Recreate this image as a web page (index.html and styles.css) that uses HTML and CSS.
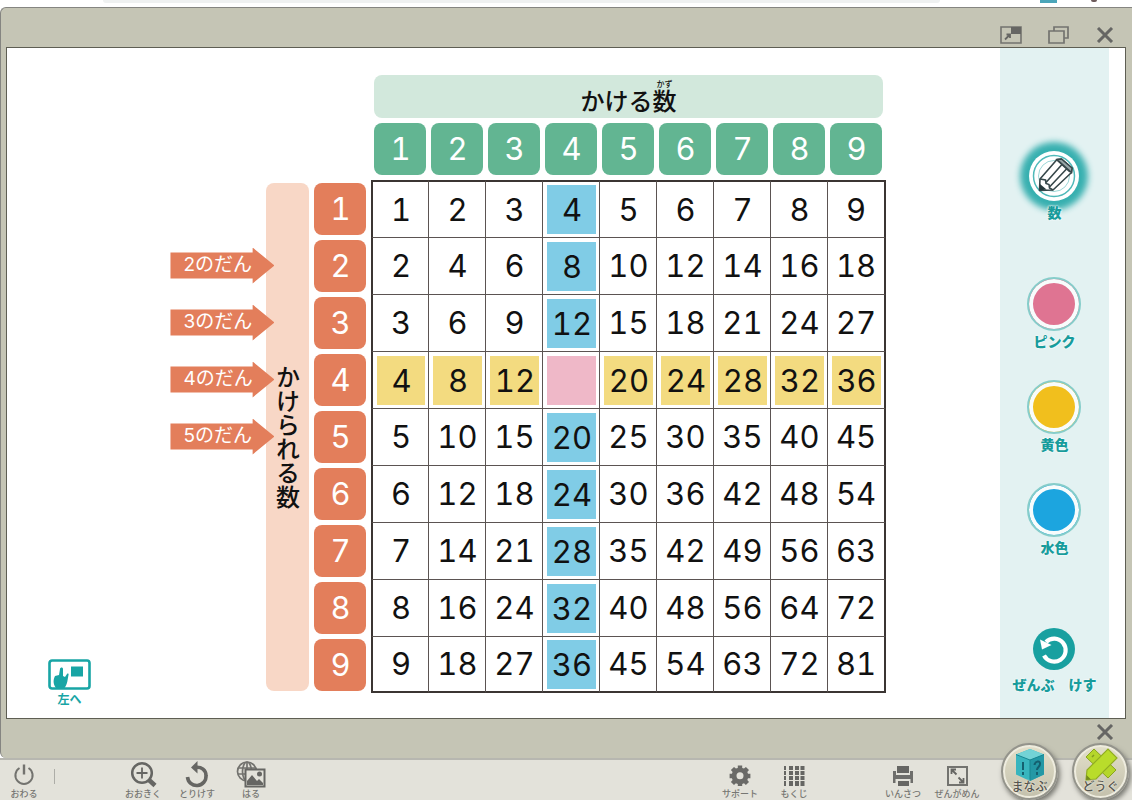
FILE: index.html
```html
<!DOCTYPE html>
<html lang="ja">
<head>
<meta charset="utf-8">
<meta name="viewport" content="width=device-width, initial-scale=1">
<title>かけ算九九の表</title>
<link rel="stylesheet" href="styles.css">
</head>
<body>
<div class="strip"><span class="strip-field"></span><span class="strip-badge"></span><span class="strip-dot"></span></div>

<div class="frame">
  <header class="titlebar">
    <button class="win-btn" type="button" aria-label="小さくする"><svg width="22" height="18" viewBox="0 0 22 18"><path d="M1 1h20v16H1z" fill="none" stroke="#73736f" stroke-width="1.6"/><path d="M11 1h10v7H11z" fill="#666663"/><path d="M5 13.500l5-5M6.500 8.500H10V12" fill="none" stroke="#666663" stroke-width="1.800"/></svg></button>
    <button class="win-btn" type="button" aria-label="元のサイズ"><svg width="22" height="18" viewBox="0 0 22 18"><path d="M6 5V1h14v11h-4M1 5h15v12H1z" fill="none" stroke="#73736f" stroke-width="1.700"/></svg></button>
    <button class="win-btn" type="button" aria-label="とじる"><svg width="18" height="16" viewBox="0 0 18 16"><path d="M2 1l14 14M16 1L2 15" stroke="#666664" stroke-width="3"/></svg></button>
  </header>

  <main class="stage">
    <button class="move-left" type="button">
      <svg width="43" height="31" viewBox="0 0 43 31"><rect x="1.500" y="1.500" width="40" height="28" rx="2.500" fill="#fff" stroke="#18a5a5" stroke-width="2.600"/><path d="M23 7.500h12v10H23z" fill="#18a5a5"/><path d="M8 29c-3-4-3-8-1-12l4-1 1-6c.3-2 3-2 3 0v7l2 1 2-3c1-1 2 0 1.500 1-1 5-1 9-4 13z" fill="#18a5a5"/></svg>
      <span>左へ</span>
    </button>

    <table class="board">
      <colgroup><col class="c-step"><col class="c-side"><col class="c-head"><col class="c-num" span="8"><col class="c-last"></colgroup>
      <thead>
        <tr class="r-banner"><td colspan="3"></td><th colspan="9" scope="colgroup"><div class="banner"><span>かける<ruby>数<rt>かず</rt></ruby></span></div></th></tr>
        <tr class="r-heads"><td colspan="3"></td><th scope="col"><div class="tile green">1</div></th><th scope="col"><div class="tile green">2</div></th><th scope="col"><div class="tile green">3</div></th><th scope="col"><div class="tile green">4</div></th><th scope="col"><div class="tile green">5</div></th><th scope="col"><div class="tile green">6</div></th><th scope="col"><div class="tile green">7</div></th><th scope="col"><div class="tile green">8</div></th><th scope="col"><div class="tile green">9</div></th></tr>
      </thead>
      <tbody>
        <tr><td></td><th class="side" rowspan="9" scope="rowgroup"><div class="side-bar">かけられる数</div></th><th scope="row"><div class="tile orange">1</div></th><td class="n">1</td><td class="n">2</td><td class="n">3</td><td class="n"><span class="blue">4</span></td><td class="n">5</td><td class="n">6</td><td class="n">7</td><td class="n">8</td><td class="n">9</td></tr>
        <tr><td><div class="step">2のだん</div></td><th scope="row"><div class="tile orange">2</div></th><td class="n">2</td><td class="n">4</td><td class="n">6</td><td class="n"><span class="blue">8</span></td><td class="n">10</td><td class="n">12</td><td class="n">14</td><td class="n">16</td><td class="n">18</td></tr>
        <tr><td><div class="step">3のだん</div></td><th scope="row"><div class="tile orange">3</div></th><td class="n">3</td><td class="n">6</td><td class="n">9</td><td class="n"><span class="blue">12</span></td><td class="n">15</td><td class="n">18</td><td class="n">21</td><td class="n">24</td><td class="n">27</td></tr>
        <tr><td><div class="step">4のだん</div></td><th scope="row"><div class="tile orange">4</div></th><td class="n"><span class="yellow">4</span></td><td class="n"><span class="yellow">8</span></td><td class="n"><span class="yellow">12</span></td><td class="n"><span class="pink"></span></td><td class="n"><span class="yellow">20</span></td><td class="n"><span class="yellow">24</span></td><td class="n"><span class="yellow">28</span></td><td class="n"><span class="yellow">32</span></td><td class="n"><span class="yellow">36</span></td></tr>
        <tr><td><div class="step">5のだん</div></td><th scope="row"><div class="tile orange">5</div></th><td class="n">5</td><td class="n">10</td><td class="n">15</td><td class="n"><span class="blue">20</span></td><td class="n">25</td><td class="n">30</td><td class="n">35</td><td class="n">40</td><td class="n">45</td></tr>
        <tr><td></td><th scope="row"><div class="tile orange">6</div></th><td class="n">6</td><td class="n">12</td><td class="n">18</td><td class="n"><span class="blue">24</span></td><td class="n">30</td><td class="n">36</td><td class="n">42</td><td class="n">48</td><td class="n">54</td></tr>
        <tr><td></td><th scope="row"><div class="tile orange">7</div></th><td class="n">7</td><td class="n">14</td><td class="n">21</td><td class="n"><span class="blue">28</span></td><td class="n">35</td><td class="n">42</td><td class="n">49</td><td class="n">56</td><td class="n">63</td></tr>
        <tr><td></td><th scope="row"><div class="tile orange">8</div></th><td class="n">8</td><td class="n">16</td><td class="n">24</td><td class="n"><span class="blue">32</span></td><td class="n">40</td><td class="n">48</td><td class="n">56</td><td class="n">64</td><td class="n">72</td></tr>
        <tr><td></td><th scope="row"><div class="tile orange">9</div></th><td class="n">9</td><td class="n">18</td><td class="n">27</td><td class="n"><span class="blue">36</span></td><td class="n">45</td><td class="n">54</td><td class="n">63</td><td class="n">72</td><td class="n">81</td></tr>
      </tbody>
    </table>

    <aside class="palette">
      <button class="pal pal-pencil" type="button">
        <svg class="glow" width="54" height="54" viewBox="0 0 54 54"><circle cx="27" cy="27" r="25" fill="#fff"/><circle cx="27" cy="27" r="20.500" fill="none" stroke="#4fb9b9" stroke-width="1.500"/><circle cx="27" cy="27" r="15.500" fill="none" stroke="#9bd6d6"/><path d="M12.500 41.500l.5-11.500L30 10.500l4.500-.5L45 19l-.5 4.500L26 41z" fill="#fff" stroke="#36474a" stroke-width="1.600" stroke-linejoin="round"/><path d="M30 11l13 12M34.500 16L19 33.500M39.500 20L22.500 38M13 30l5.500 1 .5 3.500 3 1 .5 3.500 3.500 2" fill="none" stroke="#36474a" stroke-width="1.600"/><path d="M30 10.500l4.500-.5L45 19l-.5 4.500z" fill="#97a5a7" stroke="#36474a" stroke-width="1.500"/><path d="M12.500 41.500l.5-6.500 6.500 5.500z" fill="#26383b"/></svg>
        <span>数</span>
      </button>
      <button class="pal" type="button"><i class="dot dot-pink"></i><span>ピンク</span></button>
      <button class="pal" type="button"><i class="dot dot-yellow"></i><span>黄色</span></button>
      <button class="pal" type="button"><i class="dot dot-blue"></i><span>水色</span></button>
      <button class="pal pal-clear" type="button">
        <svg width="42" height="42" viewBox="0 0 42 42"><circle cx="21" cy="21" r="21" fill="#18a0a0"/><path d="M13 14A11.500 11.500 0 1 1 11 27.500" fill="none" stroke="#fff" stroke-width="4.200"/><path d="M7 11.500l2 10 9.500-4.500z" fill="#fff"/></svg>
        <span>ぜんぶ　けす</span>
      </button>
    </aside>
  </main>

  <div class="underbar"><button class="win-btn" type="button" aria-label="ツールバーをとじる"><svg width="18" height="16" viewBox="0 0 18 16"><path d="M2 1l14 14M16 1L2 15" stroke="#666664" stroke-width="3"/></svg></button></div>
</div>

<footer class="toolbar">
  <button class="tool tool-end" type="button"><svg width="30" height="28" viewBox="0 0 30 28"><path d="M10.500 8a8.600 8.600 0 1 0 9 0" fill="none" stroke="#73736f" stroke-width="2"/><path d="M15 4.500v10" stroke="#73736f" stroke-width="2.400"/></svg><span>おわる</span></button>
  <span class="divider"></span>
  <div class="group">
    <button class="tool" type="button"><svg width="30" height="28" viewBox="0 0 30 28"><circle cx="14" cy="13" r="9.800" fill="none" stroke="#666663" stroke-width="2.500"/><path d="M8.500 13h11M14 7.500v11" stroke="#666663" stroke-width="1.800"/><path d="M21 20l6 5.500" stroke="#666663" stroke-width="4.500"/></svg><span>おおきく</span></button>
    <button class="tool" type="button"><svg width="30" height="28" viewBox="0 0 30 28"><path d="M12 7.500c8-1.500 12 3 12 8a9 9 0 0 1-18.500 1.500" fill="none" stroke="#666663" stroke-width="3.600"/><path d="M9 7.500L15.500 1v12.500z" fill="#666663"/></svg><span>とりけす</span></button>
    <button class="tool" type="button"><svg width="30" height="28" viewBox="0 0 30 28"><g fill="none" stroke="#73736f" stroke-width="1.700"><circle cx="11" cy="11.500" r="9.500"/><ellipse cx="11" cy="11.500" rx="4.500" ry="9.500"/><path d="M11 2v19M2 8h18M2 14h18"/></g><path d="M9.500 9.500h19v17h-19z" fill="#e3e2da" stroke="#666663" stroke-width="2"/><path d="M11 25v-4l5-6 5 6 2-2 4 4v2z" fill="#666663"/><circle cx="23.500" cy="14" r="2.500" fill="#666663"/></svg><span>はる</span></button>
  </div>
  <div class="group group-right">
    <button class="tool" type="button"><svg width="30" height="28" viewBox="0 0 30 28"><path fill="#6a6a67" fill-rule="evenodd" d="M12.800 5.500h4.400v2.400l1.800.7 1.900-1.700 3.100 3.100-1.700 1.900.7 1.900h2.400v4.400H23l-.7 1.800 1.700 1.900-3.100 3.100-1.900-1.700-1.800.7v2h-4.400v-2l-1.900-.7-1.900 1.700L5.900 21.900 7.600 20l-.7-1.800H4.600v-4.400h2.300l.7-1.900L5.900 10 9 6.900l1.900 1.700 1.900-.7zM15 12.200a3.500 3.500 0 1 0 0 7 3.500 3.500 0 0 0 0-7z"/></svg><span>サポート</span></button>
    <button class="tool" type="button"><svg width="30" height="28" viewBox="0 0 30 28"><g fill="#666663"><path d="M5 6h2v4H5zM5 11h2v4H5zM5 16h2v4H5zM5 21h2v5H5z"/><path d="M10 6h4v4h-4zM10 11h4v4h-4zM10 16h4v4h-4zM10 21h4v5h-4zM16 6h4v4h-4zM16 11h4v4h-4zM16 16h4v4h-4zM16 21h4v5h-4zM21.500 6h4v4h-4zM21.500 11h4v4h-4zM21.500 16h4v4h-4zM21.500 21h4v5h-4z"/></g></svg><span>もくじ</span></button>
  </div>
  <div class="group">
    <button class="tool" type="button"><svg width="30" height="28" viewBox="0 0 30 28"><path d="M9 6h12v7H9zM10 21h11v5H10z" fill="#666663"/><path d="M5 11h3v4h14v-4h3v12h-2.500v-4H7.500v4H5z" fill="#6e6e6b"/></svg><span>いんさつ</span></button>
    <button class="tool" type="button"><svg width="30" height="28" viewBox="0 0 30 28"><path d="M6 7h19v18H6z" fill="none" stroke="#73736f" stroke-width="2"/><path d="M9.500 14v-4.500H14M21.500 18v4.500H17M9.500 9.500l5 5M21.500 22.500l-5-5" fill="none" stroke="#666663" stroke-width="1.800"/></svg><span>ぜんがめん</span></button>
  </div>
  <nav class="rounds">
    <button class="round" type="button"><svg width="34" height="34" viewBox="0 0 34 34"><path d="M17 1l14 5.500v20L17 33 3 26.500v-20z" fill="#38b5be"/><path d="M17 1l14 5.500L17 12 3 6.500z" fill="#73d3d6"/><path d="M17 12l14-5.500v20L17 33z" fill="#2398a5"/><path d="M3 6.500L17 12l14-5.500M17 12v21" fill="none" stroke="#188591"/><path d="M10 14v8M10 24v3M21.500 17c.5-4 6-5 5.500-1 0 3-3 3-3 6M24 24v3" fill="none" stroke="#14606f" stroke-width="2"/></svg><span>まなぶ</span></button>
    <button class="round" type="button"><svg width="34" height="34" viewBox="0 0 34 34"><path d="M2 9l8-8 22 21-8 8z" fill="#b5d62b" stroke="#8aa51e"/><path d="M8 9l2-2M13 14l2-2" stroke="#829c20" stroke-width="1.500"/><path d="M2 32l1-10L24 1l9 9-21 21z" fill="#b9dc2b" stroke="#91ad22" stroke-width="1.200"/><path d="M2 32l.5-5 4.500 4.500z" fill="#738b1c"/></svg><span>どうぐ</span></button>
  </nav>
</footer>
</body>
</html>
```
FILE: styles.css
```css
* { box-sizing: border-box; }

body {
  margin: 0;
  min-height: 100vh;
  display: flex;
  flex-direction: column;
  background: #fff;
  color: #111;
  font-family: "Noto Sans CJK JP", sans-serif;
}

button {
  margin: 0;
  padding: 0;
  border: 0;
  background: none;
  color: inherit;
  font: inherit;
  cursor: pointer;
}

svg { display: block; }

/* Strip above the window */
.strip {
  display: flex;
  height: 7px;
  padding: 0 35px 0 103px;
}
.strip-field {
  flex: 1;
  height: 3px;
  margin-right: 100px;
  border-radius: 0 0 8px 8px;
  background: #eff1f1;
}
.strip-badge {
  width: 17px;
  height: 3px;
  margin-right: 34px;
  background: #4ba5b9;
}
.strip-dot {
  width: 6px;
  height: 2px;
  border-radius: 0 0 3px 3px;
  background: #6d5b5b;
}

/* Window */
.frame {
  flex: 1;
  display: flex;
  flex-direction: column;
  padding: 0 6px 0 5px;
  border: 1px solid #858581;
  border-width: 1px 0 0 1px;
  border-radius: 6px 0 0 6px;
  background: #c5c5b5;
}
.titlebar {
  display: flex;
  justify-content: flex-end;
  align-items: flex-end;
  gap: 26px;
  height: 39px;
  padding: 0 12px 2px 0;
}
.win-btn {
  display: grid;
  place-items: center;
  height: 20px;
}
.underbar {
  display: flex;
  justify-content: flex-end;
  height: 39px;
  padding: 3px 12px 0 0;
}

.stage {
  flex: 1;
  display: flex;
  border: 1px solid #5e5e53;
  background: #fff;
}

.move-left {
  align-self: flex-end;
  display: grid;
  justify-items: center;
  margin: 0 0 11px 41px;
  color: #18a5a5;
  font-size: 12px;
  font-weight: 700;
  line-height: 17px;
}

/* Multiplication table */
.board {
  align-self: flex-start;
  width: 715px;
  margin: 27px auto 24px;
  table-layout: fixed;
  border-collapse: separate;
  border-spacing: 0;
}
.board th,
.board td {
  padding: 0;
  font-weight: 400;
}
.c-step { width: 96px; }
.c-side { width: 48px; }
.c-head { width: 57px; }
.c-num { width: 57px; }
.c-last { width: 58px; }
.r-banner { height: 48px; }
.r-heads { height: 57px; }
.board tbody tr { height: 57px; }
.board thead th { vertical-align: top; }

.banner {
  display: flex;
  justify-content: center;
  height: 43px;
  margin: 0 3px;
  border-radius: 8px;
  background: #d2e8dc;
  font-size: 24px;
  font-weight: 500;
  line-height: 50px;
}
.banner ruby { ruby-align: center; }
.banner rt {
  font-size: 8px;
  line-height: 8px;
}

.tile,
.board .n {
  font-family: Inter, "Noto Sans", sans-serif;
  font-size: 31px;
  font-variant-numeric: tabular-nums;
  line-height: 52px;
  text-align: center;
}
.tile {
  width: 52px;
  height: 52px;
  border-radius: 8px;
  color: #fff;
}
.green {
  margin-left: 3px;
  background: #62b592;
}
.orange { background: #e37e5b; }
.board tbody th { vertical-align: middle; }

.side-bar {
  display: grid;
  place-items: center;
  width: 43px;
  height: 508px;
  border-radius: 8px;
  background: #f8d7c6;
  font-size: 24px;
  font-weight: 500;
  line-height: 43px;
  writing-mode: vertical-rl;
}

.step {
  position: relative;
  width: 104px;
  height: 36px;
  padding-left: 13px;
  clip-path: polygon(0 14%, 79% 14%, 79% 0, 100% 50%, 79% 100%, 79% 86%, 0 86%);
  background: #e37e5b;
  color: #fff;
  font-family: Inter, "Noto Sans CJK JP", sans-serif;
  font-size: 19px;
  line-height: 34px;
  white-space: nowrap;
}

.board .n {
  border: 1px solid #5b5452;
  border-width: 1px 0 0 1px;
  line-height: 54px;
}
.board .n:last-child { border-right: 2px solid #3b3533; }
.board th + .n { border-left: 2px solid #3b3533; }
.board tbody tr:first-child .n { border-top: 2px solid #3b3533; }
.board tbody tr:last-child .n { border-bottom: 2px solid #3b3533; }
.board .n span {
  display: block;
  height: 49px;
  margin: 0 3px 0 4px;
  line-height: 49px;
}
.blue { background: #80cce6; }
.yellow { background: #f3db80; }
.pink { background: #efb8c8; }

/* Colour palette */
.palette {
  display: flex;
  flex-direction: column;
  align-items: center;
  width: 109px;
  margin: 0 16px 0 35px;
  padding: 101px 0 24px;
  background: #e3f2f2;
}
.pal {
  display: grid;
  justify-items: center;
  margin-bottom: 29px;
  color: #189c9c;
  font-size: 14px;
  font-weight: 900;
  line-height: 20px;
  text-shadow: 0 0 2px #fff, 0 0 2px #fff;
  white-space: nowrap;
}
.pal-pencil { margin-bottom: 55px; }
.pal-pencil span {
  margin-top: -1px;
  z-index: 1;
}
.glow {
  border-radius: 50%;
  background: #38b0b0;
  box-shadow: 0 0 6px 7px #38b0b0;
}
.pal-clear { margin: auto 0 0; }
.pal-clear span { margin-top: 4px; }
.dot {
  width: 54px;
  height: 54px;
  border: 2px solid #86cdca;
  border-radius: 50%;
  box-shadow: inset 0 0 0 4px #f8fcfc;
}
.dot-pink { background: #df7492; }
.dot-yellow { background: #f1bf1d; }
.dot-blue { background: #1ca5df; }

/* Bottom toolbar */
.toolbar {
  position: relative;
  display: flex;
  height: 42px;
  padding-right: 148px;
  border-top: 2px solid #b7b7b0;
  background: #e3e2da;
  color: #777773;
}
.tool {
  display: grid;
  justify-items: center;
  align-content: start;
  width: 54px;
  font-size: 9px;
  font-weight: 500;
  line-height: 12px;
  white-space: nowrap;
}
.tool-end { width: 48px; }
.divider {
  width: 1px;
  height: 15px;
  margin: 9px 61px 0 6px;
  background: #adada7;
}
.group { display: flex; }
.group-right {
  margin-left: auto;
  margin-right: 55px;
}
.rounds {
  position: absolute;
  right: 3px;
  bottom: 0;
  display: flex;
  gap: 14px;
}
.round {
  display: grid;
  justify-items: center;
  align-content: start;
  width: 57px;
  height: 57px;
  padding-top: 3px;
  border: 2px solid #94948c;
  border-radius: 50%;
  background: linear-gradient(#e3e0ca, #c3c0ac);
  box-shadow: inset 0 0 0 2px #eeecdf, 2px 3px 5px #777770;
  color: #55554f;
  font-size: 12px;
  font-weight: 500;
  line-height: 14px;
}
.round span {
  margin-top: -3px;
  text-shadow: 0 0 2px #eeeadb, 0 0 2px #eeeadb;
}
```
